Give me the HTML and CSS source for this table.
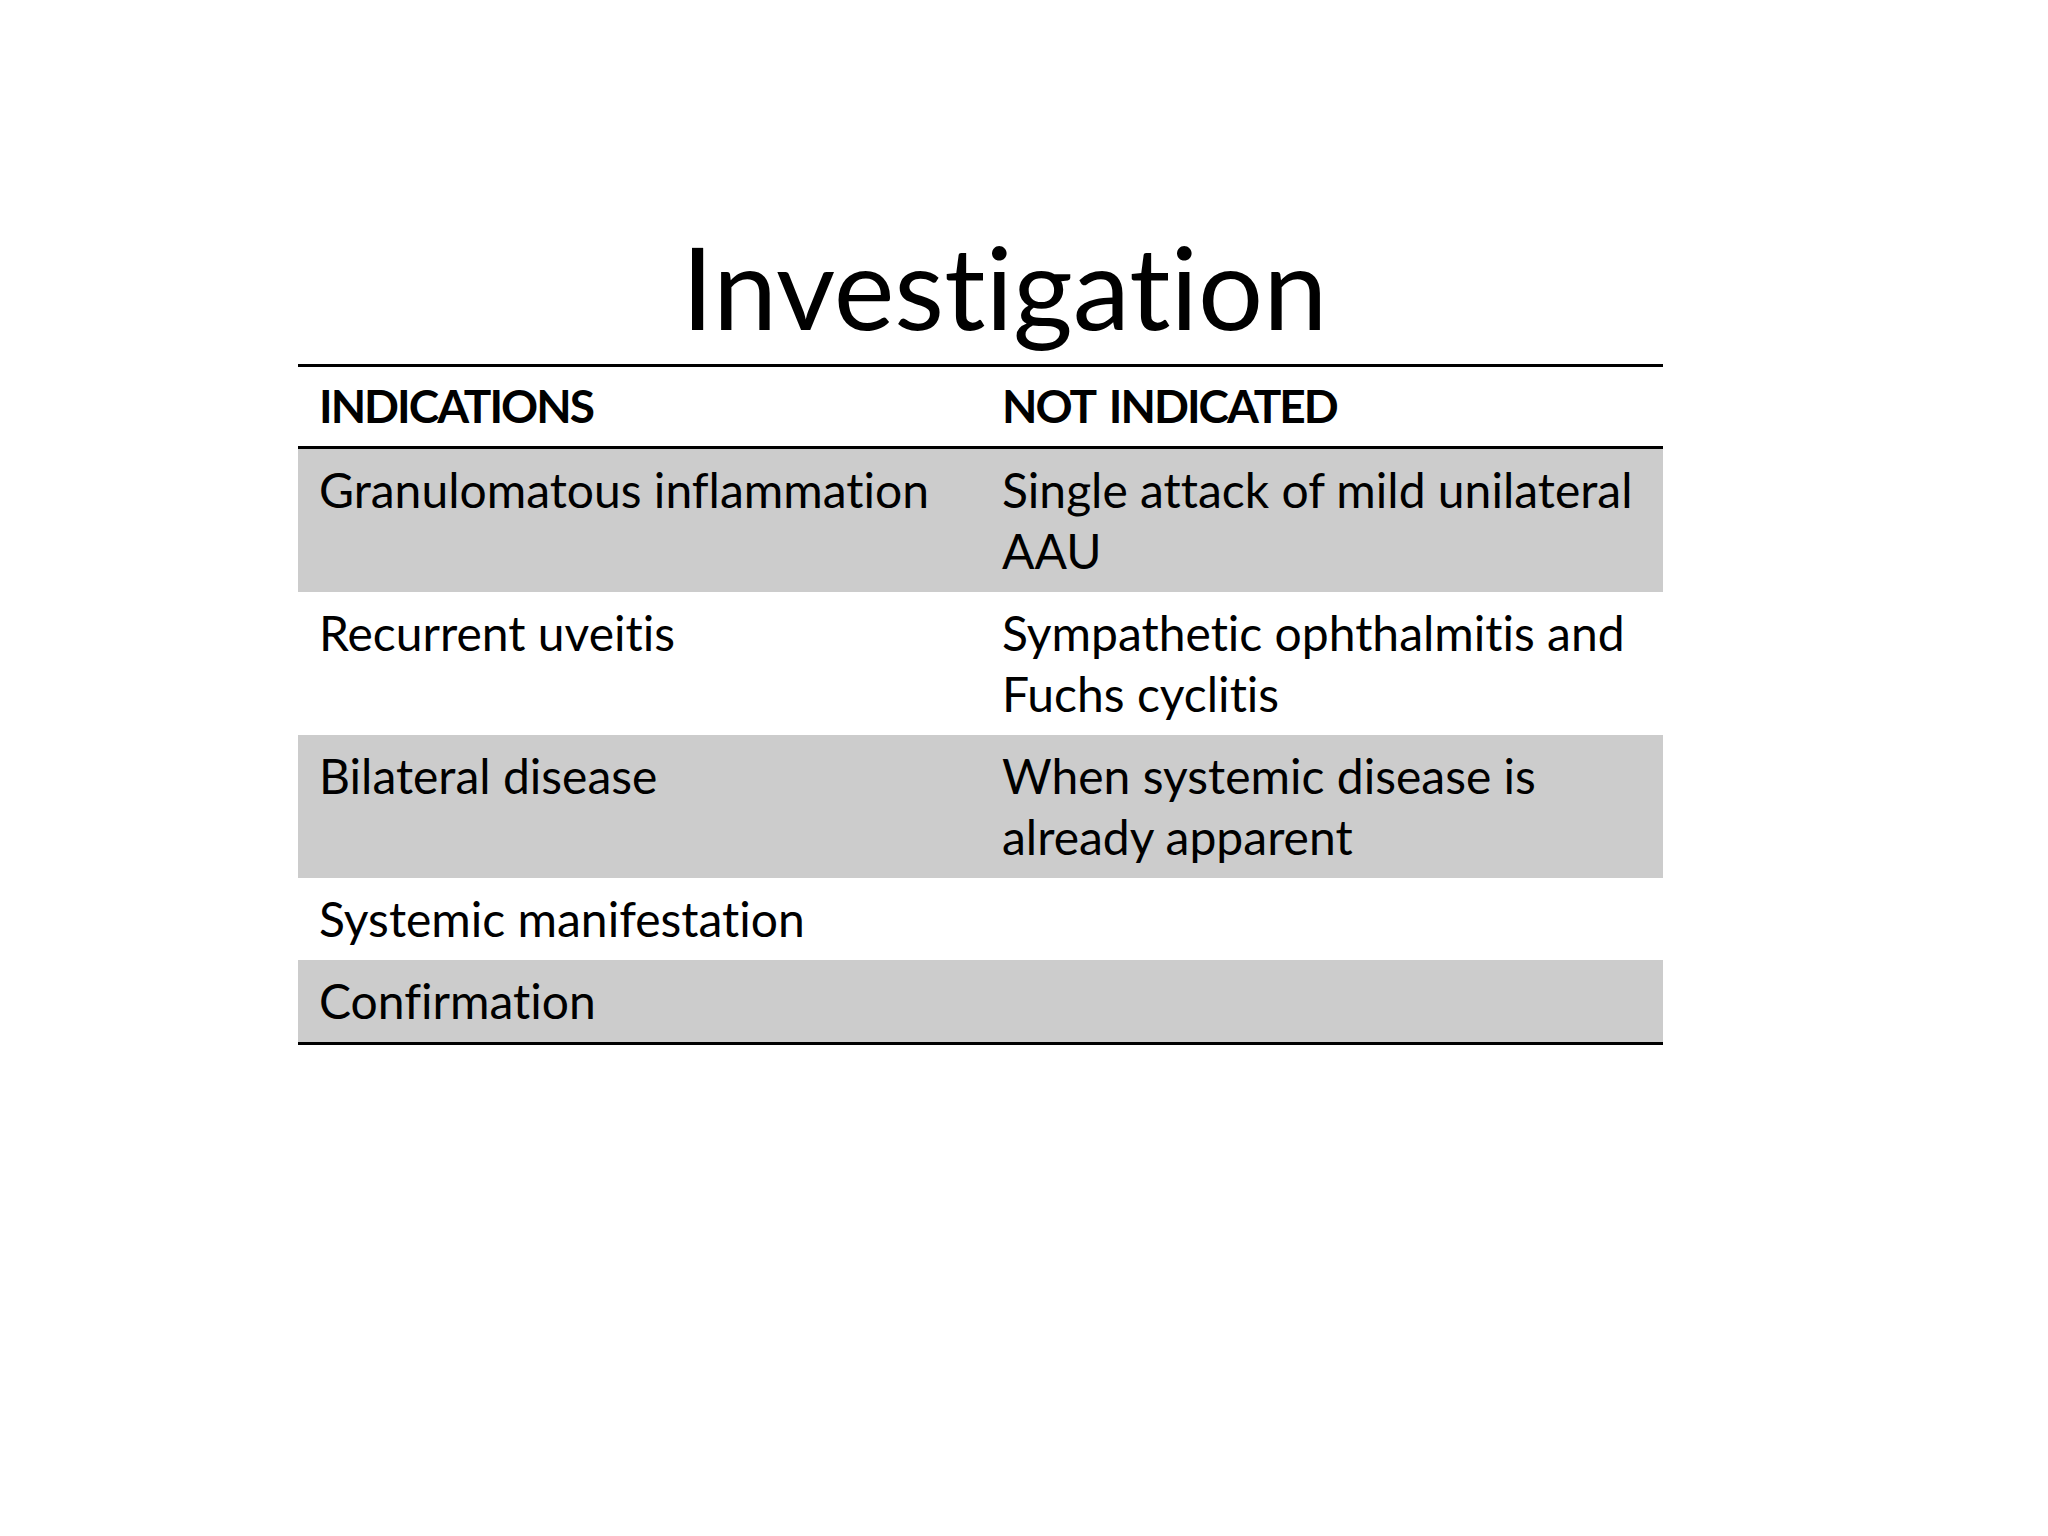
FILE: index.html
```html
<!DOCTYPE html>
<html lang="en">
<head>
<meta charset="utf-8">
<title>Investigation</title>
<link rel="stylesheet" href="styles.css">
</head>
<body>
<div class="slide">
  <h1 class="title">Investigation</h1>
  <div class="table">
    <div class="row head">
      <div class="cell">INDICATIONS</div>
      <div class="cell">NOT INDICATED</div>
    </div>
    <div class="row shade">
      <div class="cell">Granulomatous inflammation</div>
      <div class="cell">Single attack of mild unilateral AAU</div>
    </div>
    <div class="row">
      <div class="cell">Recurrent uveitis</div>
      <div class="cell">Sympathetic ophthalmitis and Fuchs cyclitis</div>
    </div>
    <div class="row shade">
      <div class="cell">Bilateral disease</div>
      <div class="cell">When systemic disease is already apparent</div>
    </div>
    <div class="row">
      <div class="cell">Systemic manifestation</div>
      <div class="cell"></div>
    </div>
    <div class="row shade last">
      <div class="cell">Confirmation</div>
      <div class="cell"></div>
    </div>
  </div>
</div>
</body>
</html>
```

FILE: styles.css
```css
html, body {
  margin: 0;
  padding: 0;
  background: #ffffff;
}
body {
  width: 2048px;
  height: 1536px;
  font-family: Lato, "Open Sans", sans-serif;
  color: #000000;
  font-variant-ligatures: none;
  font-feature-settings: "liga" 0, "dlig" 0;
}
.slide {
  padding-top: 210px;
  padding-left: 298px;
}
.title {
  margin: 0;
  width: 1365px;
  box-sizing: border-box;
  padding-left: 48px;
  font-size: 115px;
  line-height: 150px;
  font-weight: 400;
  text-align: center;
  height: 154px;
}
.table {
  width: 1365px;
  border-top: 3px solid #000;
  border-bottom: 3px solid #000;
  font-size: 48px;
  line-height: 61px;
}
.row {
  display: grid;
  grid-template-columns: 683px 682px;
}
.row.head {
  font-weight: 700;
  font-size: 46px;
  letter-spacing: -2px;
  word-spacing: 6px;
  border-bottom: 3px solid #000;
}
.row.shade {
  background: #cccccc;
}
.cell {
  padding: 10px 21px 11px 21px;
}
.head .cell {
  padding-top: 8px;
  padding-bottom: 10px;
}
```
